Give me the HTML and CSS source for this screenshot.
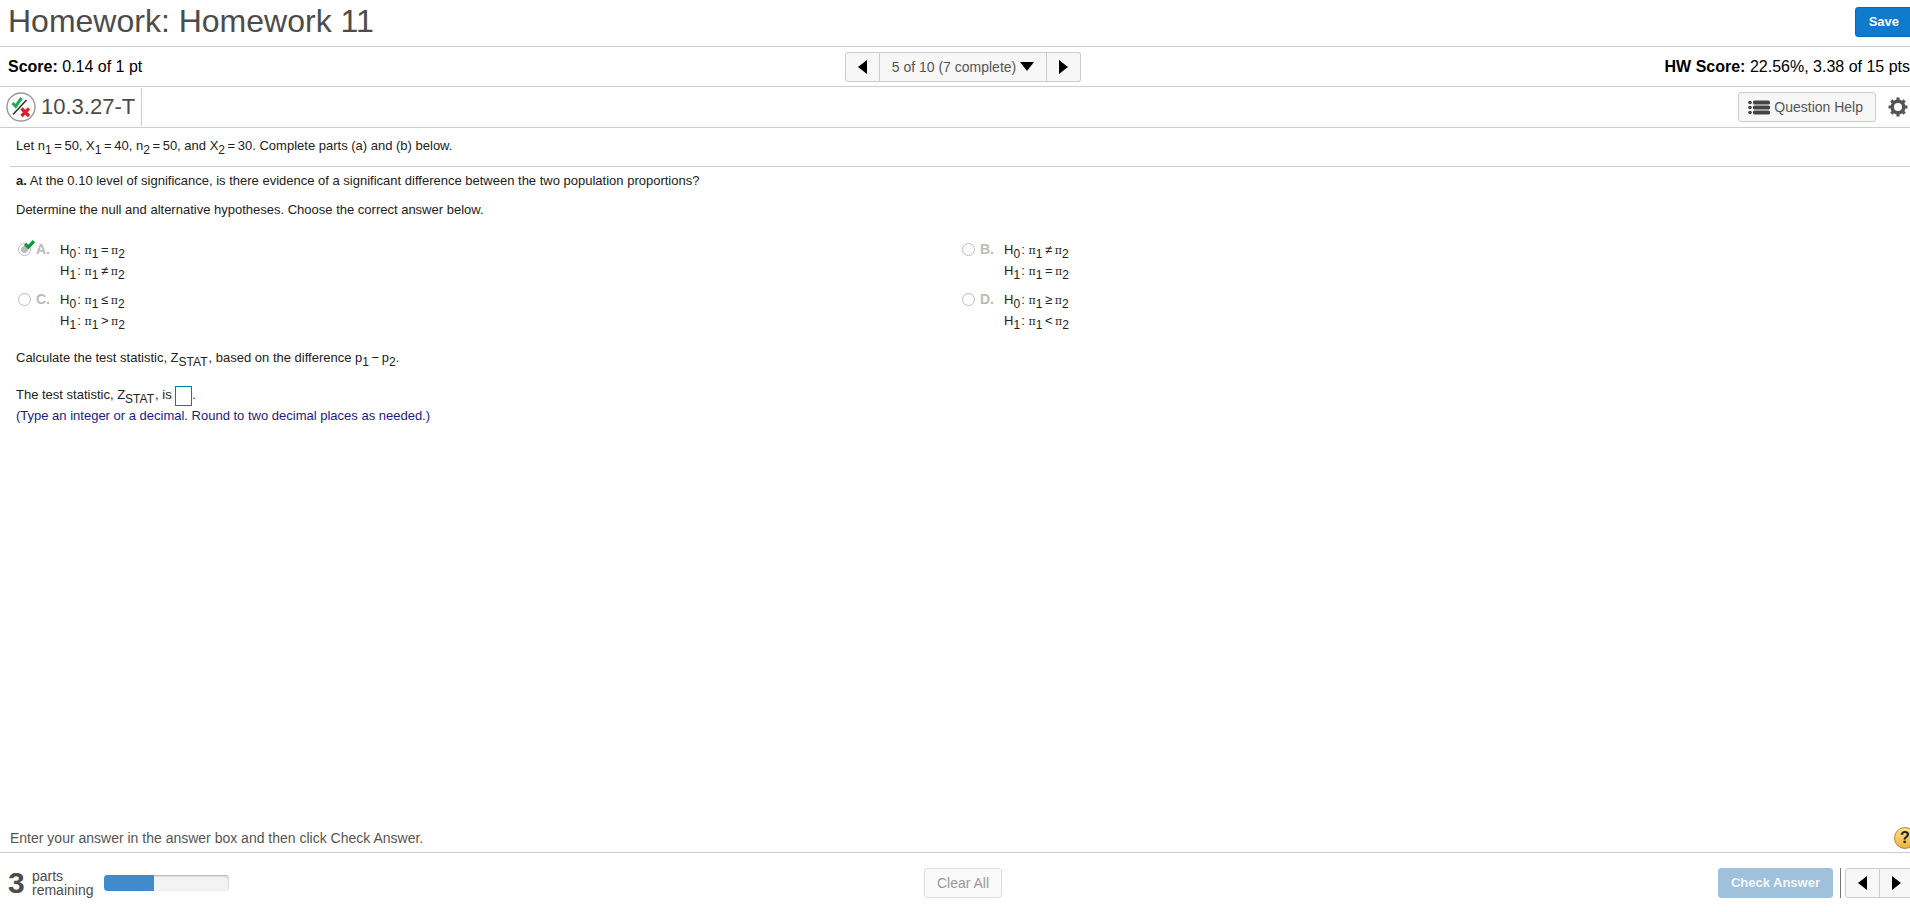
FILE: index.html
```html
<!DOCTYPE html>
<html lang="en">

<head>
    <meta charset="utf-8">
    <meta name="viewport" content="width=device-width, initial-scale=1">
    <title>Homework: Homework 11</title>
    <link rel="stylesheet" href="styles.css">
</head>

<body>
    <div class="page">
        <header class="title-bar">
            <h1>Homework: Homework 11</h1>
            <button type="button" class="btn btn-primary">Save</button>
        </header>

        <div class="score-bar">
            <div><b>Score:</b> 0.14 of 1 pt</div>
            <div class="btn-group">
                <button type="button" class="btn btn-arrow" aria-label="Previous question"><span class="arrow-left"></span></button>
                <button type="button" class="btn btn-list">5 of 10 (7 complete)<span class="arrow-down"></span></button>
                <button type="button" class="btn btn-arrow" aria-label="Next question"><span class="arrow-right"></span></button>
            </div>
            <div class="hw-score"><b>HW Score:</b> 22.56%, 3.38 of 15 pts</div>
        </div>

        <div class="question-bar">
            <div class="question-id">
                <svg class="status-icon" viewBox="0 0 30 30" aria-hidden="true">
                    <circle cx="15" cy="15" r="14" fill="#fff" stroke="#999" stroke-width="1.4" />
                    <path d="M7 22.5L20.5 8" stroke="#333" stroke-width="1.6" fill="none" />
                    <path d="M6.5 11l3.2 3.3L15.5 6" stroke="#1fae54" stroke-width="3.2" fill="none" />
                    <path d="M15.5 16.5l7.5 7.5M23 16.5l-7.5 7.5" stroke="#e01b24" stroke-width="3.2" fill="none" />
                </svg>
                <h2>10.3.27-T</h2>
            </div>
            <div class="question-tools">
                <button type="button" class="btn btn-help">
                    <svg class="list-icon" viewBox="0 0 22 15" fill="#444" aria-hidden="true">
                        <circle cx="2" cy="2.5" r="1.8" /><rect x="5" y="0.5" width="17" height="4" rx="1.5" />
                        <circle cx="2" cy="7.5" r="1.8" /><rect x="5" y="5.5" width="17" height="4" rx="1.5" />
                        <circle cx="2" cy="12.5" r="1.8" /><rect x="5" y="10.5" width="17" height="4" rx="1.5" />
                    </svg>Question Help</button>
                <button type="button" class="gear" aria-label="Settings">
                    <svg viewBox="0 0 20 20" aria-hidden="true">
                        <circle cx="10" cy="10" r="5.8" fill="none" stroke="#555" stroke-width="3.6" />
                        <path d="M10 0.5v3M10 16.5v3M0.5 10h3M16.5 10h3M3.3 3.3l2 2M14.7 14.7l2 2M3.3 16.7l2-2M14.7 5.3l2-2" stroke="#555" stroke-width="3.2" fill="none" />
                    </svg>
                </button>
            </div>
        </div>

        <main class="question">
            <p class="intro">Let n<sub>1</sub>&thinsp;=&thinsp;50, X<sub>1</sub>&thinsp;=&thinsp;40, n<sub>2</sub>&thinsp;=&thinsp;50, and X<sub>2</sub>&thinsp;=&thinsp;30. Complete parts (a) and (b) below.</p>

            <div class="part">
                <p class="part-text"><b>a.</b> At the 0.10 level of significance, is there evidence of a significant difference between the two population proportions?</p>
                <p class="part-text">Determine the null and alternative hypotheses. Choose the correct answer below.</p>

                <div class="choices">
                    <div class="choice correct">
                        <input type="radio" name="hyp" id="choiceA" checked disabled>
                        <svg class="check" viewBox="0 0 10 9" aria-hidden="true">
                            <path d="M1 3.5l3 3L9 1" stroke="#0a9a3c" stroke-width="3" fill="none" />
                        </svg>
                        <label for="choiceA"><b>A.</b>
                            <span class="hyp">
                                <span>H<sub>0</sub>&hairsp;: <i>π</i><sub>1</sub>&thinsp;=&thinsp;<i>π</i><sub>2</sub></span>
                                <span>H<sub>1</sub>&hairsp;: <i>π</i><sub>1</sub>&thinsp;≠&thinsp;<i>π</i><sub>2</sub></span>
                            </span>
                        </label>
                    </div>
                    <div class="choice">
                        <input type="radio" name="hyp" id="choiceB" disabled>
                        <label for="choiceB"><b>B.</b>
                            <span class="hyp">
                                <span>H<sub>0</sub>&hairsp;: <i>π</i><sub>1</sub>&thinsp;≠&thinsp;<i>π</i><sub>2</sub></span>
                                <span>H<sub>1</sub>&hairsp;: <i>π</i><sub>1</sub>&thinsp;=&thinsp;<i>π</i><sub>2</sub></span>
                            </span>
                        </label>
                    </div>
                    <div class="choice">
                        <input type="radio" name="hyp" id="choiceC" disabled>
                        <label for="choiceC"><b>C.</b>
                            <span class="hyp">
                                <span>H<sub>0</sub>&hairsp;: <i>π</i><sub>1</sub>&thinsp;≤&thinsp;<i>π</i><sub>2</sub></span>
                                <span>H<sub>1</sub>&hairsp;: <i>π</i><sub>1</sub>&thinsp;&gt;&thinsp;<i>π</i><sub>2</sub></span>
                            </span>
                        </label>
                    </div>
                    <div class="choice">
                        <input type="radio" name="hyp" id="choiceD" disabled>
                        <label for="choiceD"><b>D.</b>
                            <span class="hyp">
                                <span>H<sub>0</sub>&hairsp;: <i>π</i><sub>1</sub>&thinsp;≥&thinsp;<i>π</i><sub>2</sub></span>
                                <span>H<sub>1</sub>&hairsp;: <i>π</i><sub>1</sub>&thinsp;&lt;&thinsp;<i>π</i><sub>2</sub></span>
                            </span>
                        </label>
                    </div>
                </div>

                <p class="calc">Calculate the test statistic, Z<sub>STAT</sub>&hairsp;, based on the difference p<sub>1</sub>&thinsp;−&thinsp;p<sub>2</sub>.</p>
                <p class="answer"><label for="zstat">The test statistic, Z<sub>STAT</sub>&hairsp;, is</label> <input type="text" id="zstat" class="answer-box">.</p>
                <p class="hint">(Type an integer or a decimal. Round to two decimal places as needed.)</p>
            </div>
        </main>

        <div class="instruction">
            <span>Enter your answer in the answer box and then click Check Answer.</span>
            <button type="button" class="help-round">?</button>
        </div>

        <footer class="bottom-bar">
            <div class="remaining">
                <b class="count">3</b>
                <span class="parts">parts<br>remaining</span>
                <div class="progress"><div class="progress-fill" style="width: 40%"></div></div>
            </div>
            <button type="button" class="btn btn-clear" disabled>Clear All</button>
            <div class="bottom-right">
                <button type="button" class="btn btn-check" disabled>Check Answer</button>
                <span class="divider"></span>
                <div class="btn-group">
                    <button type="button" class="btn btn-arrow" aria-label="Previous"><span class="arrow-left"></span></button>
                    <button type="button" class="btn btn-arrow" aria-label="Next"><span class="arrow-right"></span></button>
                </div>
            </div>
        </footer>
    </div>
</body>

</html>
```
FILE: styles.css
```css
* {
    box-sizing: border-box;
}

body {
    margin: 0;
    overflow: hidden;
    background: #fff;
    color: #222;
    font: 13px "Liberation Sans", Arial, sans-serif;
}

/* the player is a little wider than its frame */
.page {
    display: flex;
    flex-direction: column;
    width: calc(100% + 16px);
    height: 100vh;
}

h1,
h2,
p {
    margin: 0;
    font-weight: normal;
}

h1,
h2 {
    color: #4c4c4c;
}

/* buttons */
.btn {
    height: 30px;
    padding: 0 12px;
    border: 1px solid #ccc;
    border-radius: 3px;
    background: #f7f7f7;
    color: #555;
    font: 14px "Liberation Sans", Arial, sans-serif;
}

.btn-primary {
    padding: 0 13px;
    border-color: #0a69b5;
    background: #0d7acd;
    color: #fff;
    font-size: 13px;
    font-weight: bold;
}

.btn-group {
    display: flex;
}

.btn-group .btn {
    display: flex;
    align-items: center;
    border-radius: 0;
}

.btn-group .btn + .btn {
    border-left: 0;
}

.btn-group .btn:first-child {
    width: 35px;
    border-radius: 3px 0 0 3px;
}

.btn-group .btn:last-child {
    border-radius: 0 3px 3px 0;
}

.btn-arrow {
    justify-content: center;
    width: 34px;
    padding: 0;
}

.arrow-left,
.arrow-right {
    border: 7px solid transparent;
}

.arrow-left {
    border-left: 0;
    border-right: 9px solid #000;
}

.arrow-right {
    border-right: 0;
    border-left: 9px solid #000;
}

.arrow-down {
    margin-left: 4px;
    border: 7px solid transparent;
    border-top: 9px solid #000;
    border-bottom: 0;
}

/* top bars */
.title-bar,
.score-bar,
.question-bar {
    display: flex;
    flex: none;
    align-items: center;
    justify-content: space-between;
    border-bottom: 1px solid #c8cede;
}

.title-bar {
    height: 47px;
    padding: 0 13px 3px 8px;
}

.title-bar h1 {
    font-size: 32px;
}

.score-bar {
    display: grid;
    grid-template-columns: 1fr auto 1fr;
    height: 40px;
    padding: 0 8px;
    color: #000;
    font-size: 16px;
}

.hw-score {
    padding-right: 8px;
    text-align: right;
}

.question-bar {
    height: 41px;
    padding: 0 18px 0 6px;
}

.question-id {
    display: flex;
    align-items: center;
    gap: 5px;
    height: 38px;
    padding-right: 6px;
    border-right: 1px solid #c8cede;
}

.question-id h2 {
    font-size: 22px;
}

.status-icon {
    width: 30px;
    height: 30px;
}

.question-tools {
    display: flex;
    align-items: center;
    gap: 12px;
}

.btn-help {
    display: flex;
    align-items: center;
    gap: 4px;
    padding: 0 12px 0 9px;
}

.list-icon {
    width: 22px;
    height: 15px;
}

.gear {
    display: flex;
    padding: 0;
    border: 0;
    background: none;
}

.gear svg {
    width: 20px;
    height: 20px;
}

/* question */
.question {
    flex: 1;
    padding-left: 10px;
    line-height: 20px;
}

.intro {
    height: 38px;
    padding: 8px 6px 0;
}

sub {
    position: relative;
    top: 4px;
    font-size: 12px;
    line-height: 0;
    vertical-align: baseline;
}

.part {
    padding: 0 6px;
    border-top: 1px solid #c8cede;
}

.part-text {
    padding: 4px 0 5px;
}

.choices {
    display: grid;
    grid-template-columns: 1fr 1fr;
    row-gap: 8px;
    padding: 14px 14px 0 2px;
}

.choice {
    position: relative;
    display: flex;
    align-items: flex-start;
    gap: 5px;
}

.choice input {
    appearance: none;
    width: 13px;
    height: 13px;
    margin: 4px 0 0;
    border: 1px solid #bbb;
    border-radius: 50%;
    background: #fff;
}

.choice input:checked {
    background: radial-gradient(#bbb 3px, #fff 4px);
}

.check {
    position: absolute;
    top: 1px;
    left: 6px;
    width: 11px;
    height: 10px;
}

.choice label {
    display: flex;
}

.choice b {
    width: 24px;
    color: #bbb;
    font-size: 14px;
}

.hyp span {
    display: block;
    height: 21px;
    line-height: 21px;
}

.hyp i {
    font: 11px "DejaVu Serif", serif;
}

.calc {
    padding-top: 17px;
}

.answer {
    padding-top: 17px;
}

.answer-box {
    width: 17px;
    height: 20px;
    padding: 0;
    border: 1px solid #007fa3;
    vertical-align: middle;
}

.hint {
    color: #1a1a8c;
}

/* bottom */
.instruction {
    display: flex;
    flex: none;
    align-items: center;
    justify-content: space-between;
    height: 28px;
    padding: 0 10px;
    color: #555;
    font-size: 14px;
}

.help-round {
    width: 22px;
    height: 22px;
    padding: 0;
    border: 1px solid #b08a3a;
    border-radius: 50%;
    background: linear-gradient(#fde08a, #eeb33c);
    color: #222;
    font: bold 16px "Liberation Sans", Arial, sans-serif;
}

.bottom-bar {
    display: grid;
    flex: none;
    grid-template-columns: 1fr auto 1fr;
    align-items: center;
    height: 60px;
    padding: 0 8px;
    border-top: 1px solid #c8cede;
    color: #4c4c4c;
}

.remaining {
    display: flex;
    align-items: center;
}

.count {
    width: 24px;
    font-size: 30px;
}

.parts {
    font-size: 14px;
    line-height: 14px;
}

.progress {
    width: 125px;
    height: 16px;
    margin-left: 11px;
    overflow: hidden;
    border-radius: 4px;
    background: #f3f3f3;
    box-shadow: inset 0 1px 2px #aaa;
}

.progress-fill {
    height: 100%;
    background: #428bca;
}

.btn-clear {
    border-color: #ddd;
    background: #fafafa;
    color: #999;
}

.bottom-right {
    display: flex;
    align-items: center;
    justify-content: flex-end;
    padding-right: 4px;
}

.btn-check {
    border-color: #9fc1dc;
    background: #9fc1dc;
    color: #f4f8fb;
    font-size: 13px;
    font-weight: bold;
}

.divider {
    width: 1px;
    height: 30px;
    margin: 0 4px 0 7px;
    background: #777;
}
```
